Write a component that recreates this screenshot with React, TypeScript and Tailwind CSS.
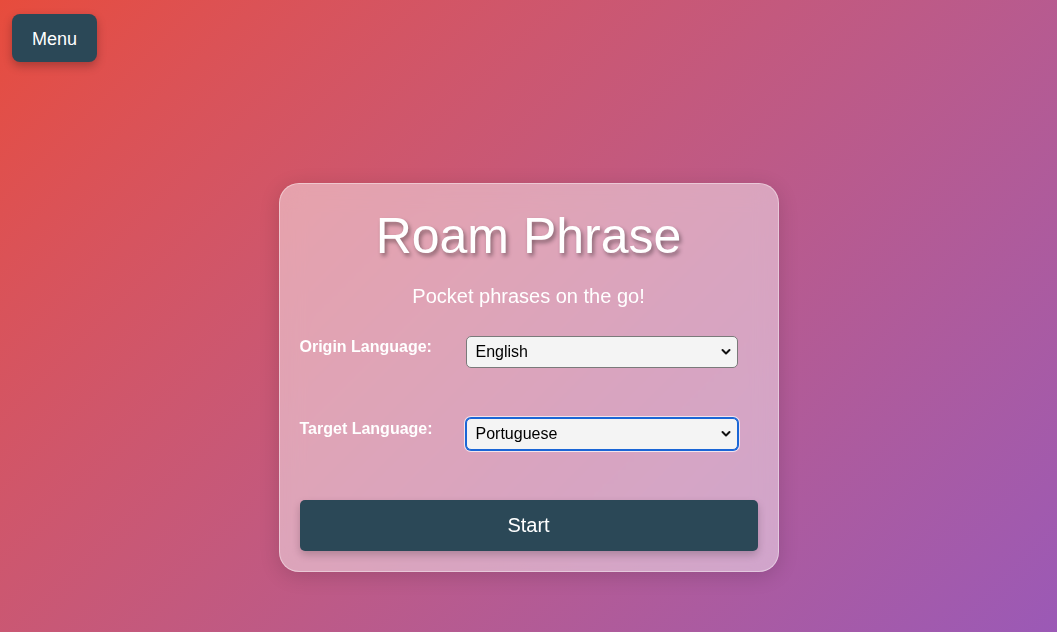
import { useState } from 'react';

const languages = ['English', 'Portuguese', 'Spanish', 'French', 'German', 'Italian', 'Japanese'];

const Chevron = () => (
    <svg
        className="pointer-events-none absolute right-[7px] top-1/2 -translate-y-1/2"
        width="10"
        height="7"
        viewBox="0 0 10 7"
        fill="none"
    >
        <path d="M1.5 1.5 L5 5 L8.5 1.5" stroke="#111" strokeWidth="2" strokeLinecap="round" strokeLinejoin="round" />
    </svg>
);

const LanguageRow = ({
    label,
    value,
    onChange,
    focused,
}: {
    label: string;
    value: string;
    onChange: (v: string) => void;
    focused?: boolean;
}) => (
    <div className="flex items-start">
        <label className="w-[166px] pt-[2px] text-[16px] leading-[18px] font-bold text-white">
            {label}
        </label>
        <div className="relative w-[272px]">
            <select
                value={value}
                onChange={(e) => onChange(e.target.value)}
                className={
                    focused
                        ? 'h-[32px] w-full appearance-none rounded-[5px] border border-[#1a66d6] bg-[#f4f4f4] pl-[9px] text-[16px] text-black outline-none shadow-[0_0_0_1px_#1a66d6,0_0_0_2px_rgba(255,255,255,0.7)]'
                        : 'h-[32px] w-full appearance-none rounded-[5px] border border-[#7a7a7a] bg-[#f4f4f4] pl-[9px] text-[16px] text-black outline-none'
                }
            >
                {languages.map((lang) => (
                    <option key={lang} value={lang}>
                        {lang}
                    </option>
                ))}
            </select>
            <Chevron />
        </div>
    </div>
);

export default function App() {
    const [origin, setOrigin] = useState('English');
    const [target, setTarget] = useState('Portuguese');

    return (
        <div
            className="relative min-h-screen bg-linear-135 from-[#e74c3c] to-[#9b59b6] pt-[183px]"
            style={{ fontFamily: '"Liberation Sans", Arial, sans-serif' }}
        >
            {/* Menu */}
            <button className="absolute top-[14px] left-[12px] rounded-[8px] bg-[#2b4857] px-5 pt-[13px] pb-[11px] text-[18px] leading-[24px] text-white shadow-[0_4px_10px_rgba(0,0,0,0.25)]">
                Menu
            </button>

            {/* Card */}
            <div className="mx-auto w-[500px] rounded-[20px] border border-white/40 bg-white/45 p-5 shadow-[0_4px_20px_rgba(0,0,0,0.15)] backdrop-blur-md">
                <h1 className="pt-[4px] text-center text-[50px] leading-[57px] text-white [text-shadow:2px_3px_4px_rgba(0,0,0,0.4)]">
                    Roam Phrase
                </h1>
                <p className="mt-[20px] text-center text-[20px] leading-[23px] text-white">
                    Pocket phrases on the go!
                </p>

                <div className="mt-[28px] flex flex-col gap-[50px]">
                    <LanguageRow label="Origin Language:" value={origin} onChange={setOrigin} />
                    <LanguageRow label="Target Language:" value={target} onChange={setTarget} focused />
                </div>

                <button className="mt-[50px] h-[51px] w-full rounded-[5px] bg-[#2b4857] pb-[2px] text-[20px] text-white shadow-[0_4px_8px_rgba(0,0,0,0.2)]">
                    Start
                </button>
            </div>
        </div>
    );
}
